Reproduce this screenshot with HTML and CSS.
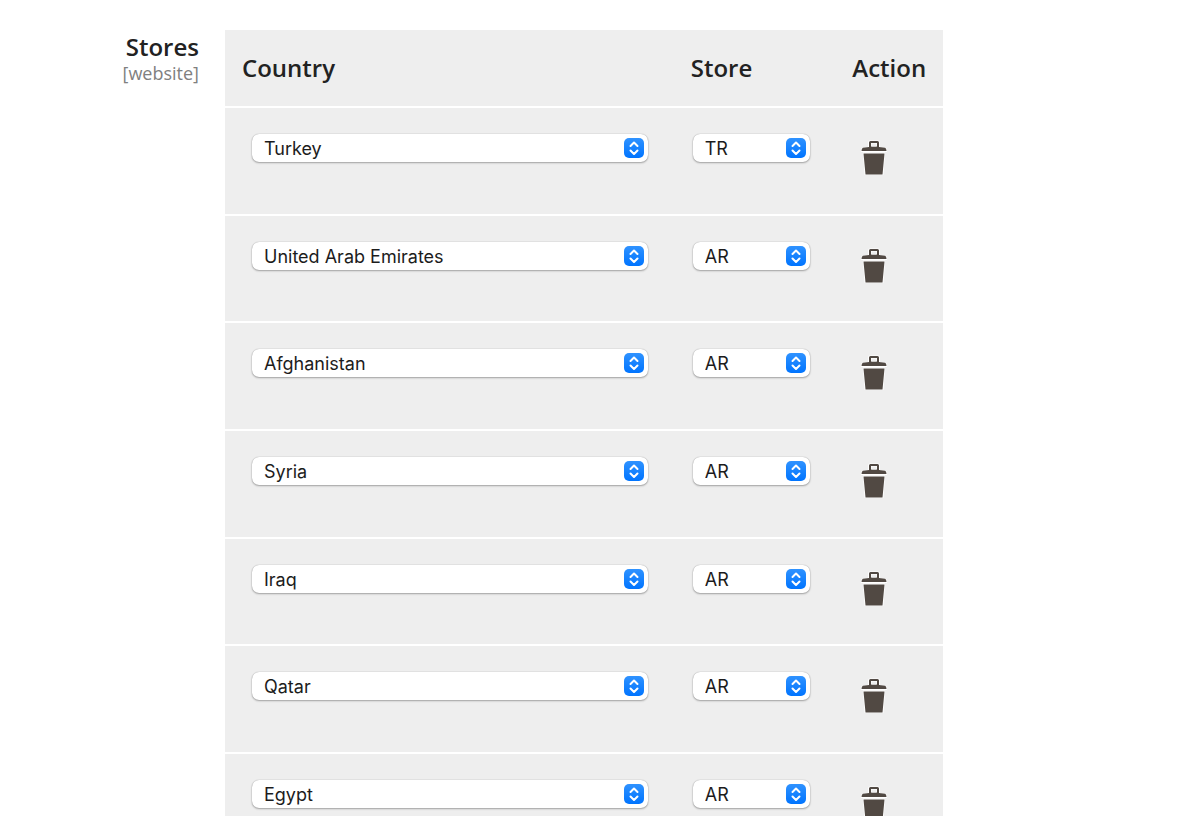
FILE: index.html
```
<!DOCTYPE html>
<html lang="en">
<head>
    <meta charset="UTF-8">
    <meta name="viewport" content="width=device-width, initial-scale=1.0">
    <title>Stores</title>
    <link rel="stylesheet" href="styles.css">
</head>
<body>
    <svg width="0" height="0" class="sprite" aria-hidden="true">
        <symbol id="trash" viewBox="0 0 28 38">
            <path class="halo" d="M9 9V3.500Q9 2.500 10 2.500H18Q19 2.500 19 3.500V9L26 10V12H2V10ZM4 14.500H24L22.500 35H5.500Z"/>
            <path fill-rule="evenodd" d="M9 8V3.500Q9 2 10.500 2H17.500Q19 2 19 3.500V8L25 8.700Q26.500 9 26.500 12H1.500Q1.500 9 3 8.700ZM11 4V7.500H17V4ZM3.500 14.500H24.500L22.500 35.500H5.500Z"/>
            <path class="gap" d="M11.500 4.500H16.500V7.500H11.500Z"/>
        </symbol>
    </svg>
    <div class="field">
        <div class="label" id="storesLabel">
            <span class="title">Stores</span>
            <span class="scope">[website]</span>
        </div>
        <table class="stores" aria-labelledby="storesLabel">
            <thead>
                <tr>
                    <th class="country">Country</th>
                    <th class="store">Store</th>
                    <th class="action">Action</th>
                </tr>
            </thead>
            <tbody>
                <tr>
                    <td class="country"><select aria-label="Country"><option>Turkey</option></select></td>
                    <td class="store"><select aria-label="Store"><option>TR</option><option>AR</option></select></td>
                    <td class="action"><button type="button" aria-label="Delete"><svg><use href="#trash"/></svg></button></td>
                </tr>
                <tr>
                    <td class="country"><select aria-label="Country"><option>United Arab Emirates</option></select></td>
                    <td class="store"><select aria-label="Store"><option>AR</option><option>TR</option></select></td>
                    <td class="action"><button type="button" aria-label="Delete"><svg><use href="#trash"/></svg></button></td>
                </tr>
                <tr>
                    <td class="country"><select aria-label="Country"><option>Afghanistan</option></select></td>
                    <td class="store"><select aria-label="Store"><option>AR</option><option>TR</option></select></td>
                    <td class="action"><button type="button" aria-label="Delete"><svg><use href="#trash"/></svg></button></td>
                </tr>
                <tr>
                    <td class="country"><select aria-label="Country"><option>Syria</option></select></td>
                    <td class="store"><select aria-label="Store"><option>AR</option><option>TR</option></select></td>
                    <td class="action"><button type="button" aria-label="Delete"><svg><use href="#trash"/></svg></button></td>
                </tr>
                <tr>
                    <td class="country"><select aria-label="Country"><option>Iraq</option></select></td>
                    <td class="store"><select aria-label="Store"><option>AR</option><option>TR</option></select></td>
                    <td class="action"><button type="button" aria-label="Delete"><svg><use href="#trash"/></svg></button></td>
                </tr>
                <tr>
                    <td class="country"><select aria-label="Country"><option>Qatar</option></select></td>
                    <td class="store"><select aria-label="Store"><option>AR</option><option>TR</option></select></td>
                    <td class="action"><button type="button" aria-label="Delete"><svg><use href="#trash"/></svg></button></td>
                </tr>
                <tr>
                    <td class="country"><select aria-label="Country"><option>Egypt</option></select></td>
                    <td class="store"><select aria-label="Store"><option>AR</option><option>TR</option></select></td>
                    <td class="action"><button type="button" aria-label="Delete"><svg><use href="#trash"/></svg></button></td>
                </tr>
            </tbody>
        </table>
    </div>
</body>
</html>
```
FILE: styles.css
```
* {
    box-sizing: border-box;
}
body {
    margin: 0;
    background: white;
    color: #222;
    font-family: "Open Sans", "Noto Sans", sans-serif;
}
.sprite {
    display: block;
}
.field {
    display: grid;
    grid-template-columns: 199fr 718fr 231fr;
    column-gap: 26px;
    align-items: start;
    padding-top: 30px;
}
.label {
    padding-top: 3px;
    text-align: right;
}
.label span {
    display: block;
}
.title {
    font-size: 24px;
    font-weight: 600;
    line-height: 28px;
}
.scope {
    color: #808080;
    font-size: 18px;
    line-height: 24px;
}
.stores {
    width: 100%;
    table-layout: fixed;
    border-collapse: separate;
    border-spacing: 0;
    background: #eee;
}
th {
    padding: 20px 17px;
    border-bottom: 2px solid white;
    font-size: 24px;
    font-weight: 600;
    line-height: 36px;
    text-align: left;
}
td {
    height: 108px;
    padding: 26px 27px;
    border-bottom: 2px solid white;
    vertical-align: top;
}
tr:nth-child(3n+2) td {
    height: 107px;
}
th.country {
    width: 62.5%;
}
th.store {
    width: 22.5%;
}
th.action {
    text-align: right;
}
td.country {
    padding-right: 26px;
}
td.store {
    padding: 26px 25px 26px 19px;
}
td.action {
    padding: 31px 25px;
}
select {
    display: block;
    width: 100%;
    height: 28px;
    padding: 0 32px 0 12px;
    border: 0;
    border-radius: 7px;
    appearance: none;
    background: white url("data:image/svg+xml,%3Csvg xmlns='http://www.w3.org/2000/svg' width='20' height='20'%3E%3Cdefs%3E%3ClinearGradient id='g' x2='0' y2='1'%3E%3Cstop stop-color='%232f92ff'/%3E%3Cstop offset='1' stop-color='%230074ff'/%3E%3C/linearGradient%3E%3C/defs%3E%3Crect width='20' height='20' rx='5' fill='url(%23g)'/%3E%3Cpath d='M6.500 8L10 4.500 13.500 8M6.500 12.500L10 16 13.500 12.500' fill='none' stroke='white' stroke-width='2' stroke-linecap='round' stroke-linejoin='round'/%3E%3C/svg%3E") no-repeat right 4px center;
    box-shadow: 0 0 1px rgba(0, 0, 0, 0.35), 0 1px 2px rgba(0, 0, 0, 0.3);
    color: #1c1c1c;
    font-family: Inter, "Liberation Sans", sans-serif;
    font-size: 18px;
}
button {
    display: block;
    padding: 0;
    border: 0;
    background: none;
    cursor: pointer;
}
button svg {
    display: block;
    width: 28px;
    height: 38px;
    fill: #514943;
}
.halo {
    fill: white;
    stroke: white;
    stroke-width: 2;
}
.gap {
    fill: #eee;
}
```
